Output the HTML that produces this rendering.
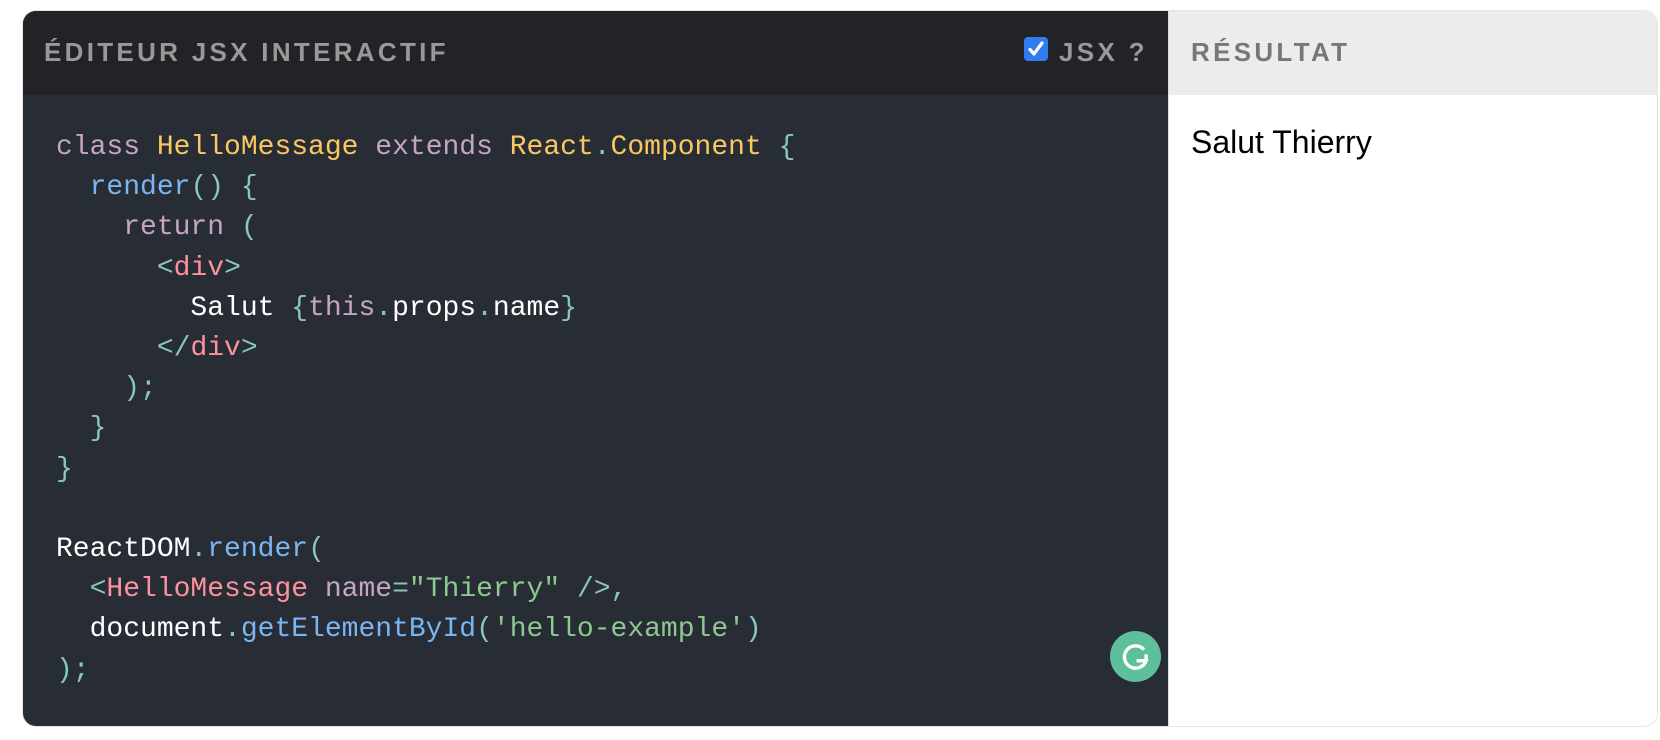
<!DOCTYPE html>
<html><head><meta charset="utf-8"><style>
html,body{margin:0;padding:0;background:#fff;width:1660px;height:740px;overflow:hidden}
.card{position:absolute;left:23px;top:11px;width:1634px;height:715px;border-radius:13px;overflow:hidden;background:#fff;box-shadow:0 0 0 1px #e4e4e4}
.left{position:absolute;left:0;top:0;width:1145px;height:715px;background:#282c34}
.lh{position:absolute;left:0;top:0;width:1145px;height:84px;background:#222327}
.h{position:absolute;top:26px;font:bold 26px "Liberation Sans",sans-serif;letter-spacing:3.3px;color:#999;line-height:30px;white-space:nowrap}
.right{position:absolute;left:1145px;top:0;width:489px;height:715px;background:#fff;border-left:1px solid #ddd}
.rh{position:absolute;left:0;top:0;width:489px;height:84px;background:#ececec}
pre{position:absolute;left:33px;top:117px;margin:0;font:28px "Liberation Mono",monospace;line-height:40.2px;color:#fff}
.k{color:#c5a5c5}.c{color:#fac863}.p{color:#88c6be}.f{color:#79b6f2}.t{color:#fc929e}.s{color:#8dc891}
.cb{position:absolute;left:1001px;top:26px;width:24px;height:24px;border-radius:4px;background:#2f7bf0}
.g{position:absolute;left:1087px;top:620px;width:51px;height:51px;border-radius:50%;background:#5ec09b}
</style></head><body>
<div class="card">
<div class="left">
<div class="lh"></div>
<div class="h" style="left:21px">ÉDITEUR JSX INTERACTIF</div>
<div class="cb"><svg width="24" height="24" viewBox="0 0 24 24"><path d="M6 12.5l4 4.5 8-11" stroke="#fff" stroke-width="3.2" fill="none" stroke-linecap="round" stroke-linejoin="round"/></svg></div>
<div class="h" style="left:1036px">JSX ?</div>
<pre><span class="k">class</span> <span class="c">HelloMessage</span> <span class="k">extends</span> <span class="c">React</span><span class="p">.</span><span class="c">Component</span> <span class="p">{</span>
  <span class="f">render</span><span class="p">()</span> <span class="p">{</span>
    <span class="k">return</span> <span class="p">(</span>
      <span class="p">&lt;</span><span class="t">div</span><span class="p">&gt;</span>
        Salut <span class="p">{</span><span class="k">this</span><span class="p">.</span>props<span class="p">.</span>name<span class="p">}</span>
      <span class="p">&lt;/</span><span class="t">div</span><span class="p">&gt;</span>
    <span class="p">);</span>
  <span class="p">}</span>
<span class="p">}</span>

ReactDOM<span class="p">.</span><span class="f">render</span><span class="p">(</span>
  <span class="p">&lt;</span><span class="t">HelloMessage</span> <span class="k">name</span><span class="p">=</span><span class="s">"Thierry"</span> <span class="p">/&gt;,</span>
  document<span class="p">.</span><span class="f">getElementById</span><span class="p">(</span><span class="s">'hello-example'</span><span class="p">)</span>
<span class="p">);</span></pre>
<div class="g"><svg width="51" height="51" viewBox="0 0 48 48"><path d="M32 17.5A10.5 10.5 0 1 0 34 28h-9M34 28v-6" stroke="#fff" stroke-width="3.2" fill="none"/></svg></div>
</div>
<div class="right">
<div class="rh"></div>
<div class="h" style="left:22px;color:#777">RÉSULTAT</div>
<div style="position:absolute;left:22px;top:111px;font:32px/40px 'Liberation Sans',sans-serif;color:#000">Salut Thierry</div>
</div>
</div>
</body></html>
